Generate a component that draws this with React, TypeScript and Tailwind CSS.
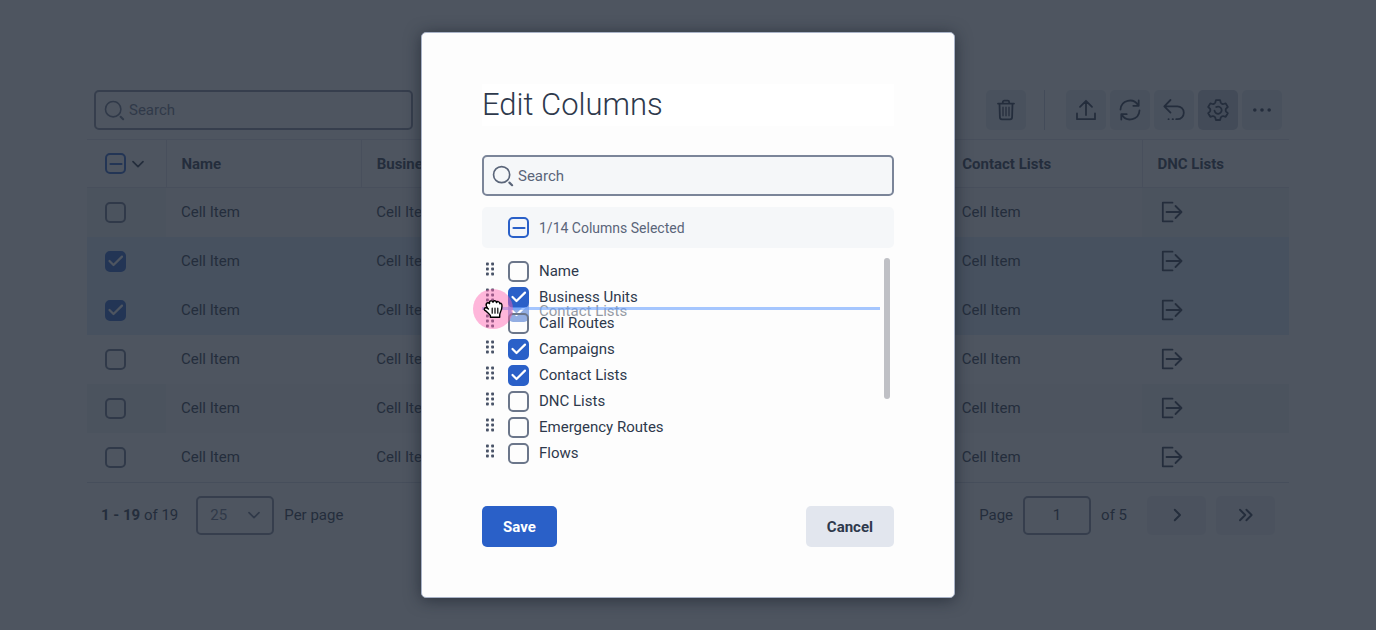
import type { ReactNode } from "react";

type IconProps = { className?: string; children: ReactNode };

function Icon({ className = "size-6", children }: IconProps) {
  return (
    <svg
      viewBox="0 0 24 24"
      className={className}
      fill="none"
      stroke="currentColor"
      strokeWidth="1.8"
      strokeLinecap="round"
      strokeLinejoin="round"
      aria-hidden="true"
    >
      {children}
    </svg>
  );
}

const SearchIcon = ({ className }: { className?: string }) => (
  <Icon className={className}>
    <circle cx="10.500" cy="10.500" r="8.800" />
    <path d="M19 19.200 21.900 22" strokeWidth="2.400" />
  </Icon>
);

const TrashIcon = () => (
  <Icon>
    <path d="M4 5.6h16M8.8 5.4V4.2c0-.9.6-1.5 1.500-1.500h3.400c.9 0 1.500.6 1.500 1.500v1.200M5.500 6l.4 13.300c0 1.100.9 2 2 2h8.200c1.100 0 2-.9 2-2L18.500 6" />
    <path d="M9 9.200v8.600M12 9.200v8.600M15 9.200v8.600" strokeWidth="1.300" />
  </Icon>
);

const UploadIcon = () => (
  <Icon>
    <path d="M12 17V3M6 8.800l6-6 6 6M3 15.500v5.700h18v-5.700" />
  </Icon>
);

const RefreshIcon = () => (
  <Icon>
    <path d="M2.500 11.500A9.500 9.500 0 0 1 20 7M20.700 2.500v5.300h-5.400M21.500 12.500A9.500 9.500 0 0 1 4 17M3.300 21.500v-5.300h5.400" />
  </Icon>
);

const UndoIcon = () => (
  <Icon>
    <path d="M8.500 2 2.300 8.300l6.200 6.300M2.500 8.300h12.900c3.600 0 6.400 2.900 6.400 6.400s-2.800 6.500-6.400 6.500h-1.200M10.600 21.200h.4M6.500 21.200h.2" />
  </Icon>
);

const GearIcon = () => (
  <Icon>
    <path d="M9.900 2.200h4.200l.6 2.300q.2.600.8.900l.8.500q.6.300 1.200.1l2.200-.6 2.100 3.600-1.700 1.600q-.4.500-.4 1.100v.8q0 .6.4 1.100l1.700 1.600-2.100 3.600-2.200-.6q-.6-.2-1.200.1l-.8.500q-.6.300-.8.900l-.6 2.300H9.900l-.6-2.300q-.2-.6-.8-.9l-.8-.5q-.6-.3-1.200-.1l-2.200.6-2.100-3.600 1.700-1.600q.4-.5.400-1.100v-.8q0-.6-.4-1.100L2.200 9l2.100-3.600 2.200.6q.6.200 1.200-.1l.8-.5q.6-.3.8-.9z" />
    <path d="M10.200 9.100A3.600 3.600 0 1 1 8.500 12.700" />
  </Icon>
);

const MoreIcon = () => (
  <Icon>
    <g fill="currentColor" stroke="none">
      <circle cx="4.800" cy="12" r="1.800" />
      <circle cx="12" cy="12" r="1.800" />
      <circle cx="19.200" cy="12" r="1.800" />
    </g>
  </Icon>
);

const ExportIcon = () => (
  <Icon>
    <path d="M12.500 2.700H2.800v18.600h9.700M6.500 12H21M15.500 6 21.500 12l-6 6" />
  </Icon>
);

const ChevronDown = ({ className }: { className?: string }) => (
  <Icon className={className}>
    <path d="m4.500 8.500 7.500 7.500 7.500-7.500" strokeWidth="2.600" />
  </Icon>
);

function Grip() {
  const rows = [1.5, 6.5, 11.5];
  return (
    <svg viewBox="0 0 8 13" className="mb-1 h-[14px] w-2 text-[#4a5468]" fill="currentColor" aria-hidden="true">
      {rows.map((y) => (
        <g key={y}>
          <rect x="0" y={y - 1.4} width="2.8" height="2.8" rx="0.7" />
          <rect x="5.200" y={y - 1.4} width="2.8" height="2.8" rx="0.7" />
        </g>
      ))}
    </svg>
  );
}

type CheckState = "on" | "off" | "mixed";

function Check({ state, label, id }: { state: CheckState; label?: string; id?: string }) {
  const tone =
    state === "on"
      ? "border-[#2a60c8] bg-[#2a60c8]"
      : state === "mixed"
        ? "border-[#2a60c8]"
        : "border-[#6b768a]";
  return (
    <span className="grid size-[21px] shrink-0 place-items-center">
      <input
        id={id}
        type="checkbox"
        aria-label={label}
        defaultChecked={state === "on"}
        className={`col-start-1 row-start-1 size-[21px] appearance-none rounded-[5px] border-2 ${tone}`}
      />
      {state !== "off" && (
        <svg
          viewBox="0 0 20 20"
          className={`pointer-events-none z-0 col-start-1 row-start-1 size-5 ${state === "on" ? "text-white" : "text-[#2a60c8]"}`}
          fill="none"
          stroke="currentColor"
          strokeWidth="2.200"
          strokeLinecap="round"
          strokeLinejoin="round"
          aria-hidden="true"
        >
          <path d={state === "on" ? "M3.500 10 7.500 14 16 5.600" : "M4.500 10h11"} />
        </svg>
      )}
    </span>
  );
}

const headers = ["Name", "Business Units", "Call Routes", "Campaigns", "Contact Lists"];
const rowStates: boolean[] = [false, true, true, false, false, false];

const options: { name: string; checked: boolean }[] = [
  { name: "Name", checked: false },
  { name: "Business Units", checked: true },
  { name: "Call Routes", checked: false },
  { name: "Campaigns", checked: true },
  { name: "Contact Lists", checked: true },
  { name: "DNC Lists", checked: false },
  { name: "Emergency Routes", checked: false },
  { name: "Flows", checked: false },
];

function ToolButton({ label, active, children }: { label: string; active?: boolean; children: ReactNode }) {
  return (
    <button
      type="button"
      aria-label={label}
      className={`grid size-10 place-items-center rounded-[5px] ${active ? "bg-[#c6cbd6]" : "bg-[#e5e9f0]"}`}
    >
      {children}
    </button>
  );
}

function Toolbar() {
  return (
    <div className="flex items-center justify-between px-[7px]">
      <label className="flex h-10 w-[319px] items-center gap-1 rounded-[5px] border-2 border-[#858e9e] px-2 text-[#6b768a]">
        <SearchIcon className="size-[21px] shrink-0" />
        <input type="text" placeholder="Search" aria-label="Search table" className="min-w-0 flex-1 placeholder:text-[#6b768a]" />
      </label>
      <div className="flex items-center gap-1">
        <ToolButton label="Delete"><TrashIcon /></ToolButton>
        <div className="mr-[17px] ml-[14px] h-10 w-px bg-[#c8cedb]" />
        <ToolButton label="Export"><UploadIcon /></ToolButton>
        <ToolButton label="Refresh"><RefreshIcon /></ToolButton>
        <ToolButton label="Undo"><UndoIcon /></ToolButton>
        <ToolButton label="Edit columns" active><GearIcon /></ToolButton>
        <ToolButton label="More"><MoreIcon /></ToolButton>
      </div>
    </div>
  );
}

function DataTable() {
  return (
    <table className="mt-[9px] w-full table-fixed border-collapse text-left">
      <thead>
        <tr className="h-12 border-y border-[#dfe2e8]">
          <th className="w-[79px] border-r border-[#dfe2e8] pl-[18px]">
            <div className="flex items-center gap-1">
              <Check state="mixed" label="Select all rows" />
              <ChevronDown className="size-4" />
            </div>
          </th>
          {headers.map((h) => (
            <th key={h} className="border-r border-[#dfe2e8] pl-[15px] font-bold">{h}</th>
          ))}
          <th className="w-[147px] pl-[15px] font-bold">DNC Lists</th>
        </tr>
      </thead>
      <tbody>
        {rowStates.map((on, i) => {
          const striped = !on && i % 2 === 0;
          const edge = striped ? "bg-[#f1f2f4]" : "";
          return (
            <tr key={i} className={`h-[49px] ${on ? "bg-[#dae9f7]" : striped ? "bg-[#f7f8f9]" : ""}`}>
              <td className={`pl-[18px] ${edge}`}><Check state={on ? "on" : "off"} label={`Select row ${i + 1}`} /></td>
              {headers.map((h) => (
                <td key={h} className="pl-[15px]">Cell Item</td>
              ))}
              <td className={`pl-[18px] ${edge}`}><ExportIcon /></td>
            </tr>
          );
        })}
      </tbody>
    </table>
  );
}

function Pagination() {
  return (
    <div className="flex items-center justify-between border-t border-[#d5dae4] px-[14px] pt-[13px]">
      <div className="flex items-center">
        <span><b>1 - 19</b> of 19</span>
        <div className="ml-[18px] grid h-[39px] w-[78px] items-center">
          <select
            aria-label="Rows per page"
            defaultValue="25"
            className="col-start-1 row-start-1 size-full appearance-none rounded-[5px] border-2 border-[#858e9e] px-3 text-[#6b768a]"
          >
            <option>25</option>
          </select>
          <ChevronDown className="pointer-events-none col-start-1 row-start-1 mr-3 size-4 justify-self-end text-[#6b768a]" />
        </div>
        <span className="ml-2.5">Per page</span>
      </div>
      <div className="flex items-center">
        <label htmlFor="page">Page</label>
        <input id="page" type="text" defaultValue="1" className="ml-2.5 h-[39px] w-[68px] rounded-[5px] border-2 border-[#858e9e] text-center" />
        <span className="ml-2.5">of 5</span>
        <button type="button" aria-label="Next page" className="ml-5 grid h-[39px] w-[59px] place-items-center rounded-[5px] bg-[#eff1f4]">
          <Icon className="size-[18px]"><path d="m9 5 7 7-7 7" strokeWidth="2.600" /></Icon>
        </button>
        <button type="button" aria-label="Last page" className="ml-2.5 grid h-[39px] w-[59px] place-items-center rounded-[5px] bg-[#eff1f4]">
          <Icon className="size-[18px]"><path d="m4 5 7 7-7 7M12.500 5l7 7-7 7" strokeWidth="2.600" /></Icon>
        </button>
      </div>
    </div>
  );
}

function GrabCursor() {
  return (
    <div className="pointer-events-none absolute top-[31px] -left-[9px] grid size-10 place-items-center rounded-full bg-[#ff5fb0]/45">
      <svg viewBox="0 0 20 20" className="size-5" fill="#fff" stroke="#000" strokeWidth="1.400" strokeLinejoin="round" strokeLinecap="round" aria-hidden="true">
        <path d="M4.600 9.200C3.200 7.400 2.800 5.600 3.500 4.500c.9-1.200 2.300-.8 3 .1-.2-1.500.2-2.500 1.300-2.700 1-.2 1.800.3 2.200 1.300.3-1 .9-1.500 1.800-1.400 1 .1 1.600.8 1.700 1.800.4-.8 1-1.200 1.800-1 1 .2 1.500 1.100 1.600 2.200.3-.4.8-.6 1.200-.4.8.4.900 1.500.9 2.600 0 2.200-.6 4.200-1.500 6-.6 1.200-.8 2-.8 3v2.300H7.400v-1.600c-.9-1.600-2.700-2.900-4-4.300L1.600 11.200C.7 10 1.700 8.500 3.100 8.700c.8.100 1.500.6 2.300 1.300z" />
        <path d="M9.200 9.200v5M12 9.200v5M14.800 9.200v5" strokeWidth="1.200" />
      </svg>
    </div>
  );
}

function ColumnList() {
  return (
    <div className="relative mt-2.5">
      <div className="absolute top-10 left-0 flex h-[26px] items-center pl-[26px] opacity-50" aria-hidden="true">
        <Check state="on" label="Dragged column" />
        <span className="ml-2.5">Contact Lists</span>
      </div>
      <ul className="relative">
        {options.map((o) => {
          const id = o.name.toLowerCase().replace(" ", "-");
          return (
            <li key={o.name} className="flex h-[26px] items-center pl-1">
              <Grip />
              <span className="ml-[14px] flex"><Check id={id} state={o.checked ? "on" : "off"} /></span>
              <label htmlFor={id} className="ml-2.5">{o.name}</label>
            </li>
          );
        })}
      </ul>
      <div className="absolute top-[49px] right-[14px] left-0 h-[3px] bg-[#6ba1ff]/60" />
      <GrabCursor />
      <div className="absolute top-0 right-1 h-[141px] w-[6px] rounded-full bg-[#bfc0c5]" />
    </div>
  );
}

function EditColumnsDialog() {
  return (
    <div
      role="dialog"
      aria-modal="true"
      aria-labelledby="dialog-title"
      className="w-full max-w-[534px] rounded-[5px] border border-[#a9b3c7] bg-[#fdfdfd] px-[60px] pt-[51px] pb-[50px] shadow-[0_2px_16px_rgba(20,26,38,0.6)]"
    >
      <h1 id="dialog-title" className="bg-white text-[31px] leading-[42px] font-light">Edit Columns</h1>
      <label className="mt-[29px] flex h-[41px] items-center gap-1 rounded-[5px] border-2 border-[#7b8599] bg-[#f5f7f9] px-2 text-[#5a6579]">
        <SearchIcon className="size-[22px] shrink-0" />
        <input type="text" placeholder="Search" aria-label="Search columns" className="min-w-0 flex-1 placeholder:text-[#5a6579]" />
      </label>
      <div className="mt-[11px] flex h-[41px] items-center gap-2.5 rounded-[5px] bg-[#f5f7f9] pl-[26px] text-sm text-[#5a6579]">
        <Check id="all-columns" state="mixed" />
        <label htmlFor="all-columns">1/14 Columns Selected</label>
      </div>
      <ColumnList />
      <div className="mt-10 flex justify-between font-bold">
        <button type="button" className="h-[41px] rounded-[5px] bg-[#2a60c8] px-[21px] text-white">Save</button>
        <button type="button" className="h-[41px] rounded-[5px] bg-[#e2e6ee] px-[21px]">Cancel</button>
      </div>
    </div>
  );
}

export default function App() {
  return (
    <div className="relative min-h-screen bg-[#fdfdfd] font-['Roboto','Liberation_Sans',sans-serif] text-[15px] leading-[22px] text-[#2e394c]">
      <main className="px-[87px] pt-[90px]">
        <Toolbar />
        <DataTable />
        <Pagination />
      </main>
      <div className="absolute inset-0 flex items-center justify-center bg-[#222b38]/80">
        <EditColumnsDialog />
      </div>
    </div>
  );
}
